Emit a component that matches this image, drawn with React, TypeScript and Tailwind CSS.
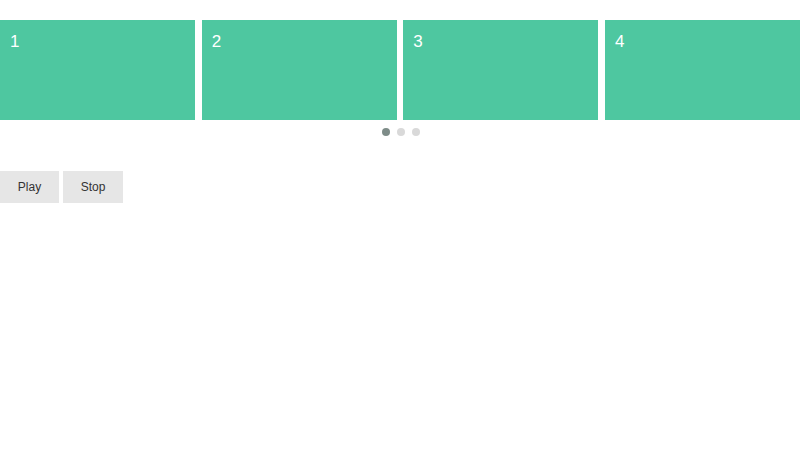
import { useState } from "react";

const slides = ["1", "2", "3", "4"];

export default function App() {
  const [active, setActive] = useState(0);

  return (
    <div className="w-[800px] h-[450px] bg-white font-['Liberation_Sans',Arial,sans-serif]">
      <div className="pt-5 grid grid-cols-4 gap-[6.5px]">
        {slides.map(s => (
          <div key={s} className="h-[100px] bg-[#4ec7a0] text-white text-[17px] px-[10px] pt-[9px]">
            {s}
          </div>
        ))}
      </div>

      <div className="flex justify-center gap-[7px] mt-[8px] ml-[1px]">
        {[0, 1, 2].map(i => (
          <button
            key={i}
            onClick={() => setActive(i)}
            className={
              i === active
                ? "w-2 h-2 rounded-full bg-[#7e8c88]"
                : "w-2 h-2 rounded-full bg-[#d9d9d9]"
            }
          />
        ))}
      </div>

      <div className="flex gap-[4px] mt-[35px]">
        <button className="w-[59px] h-[32px] bg-[#e6e6e6] text-[12px] text-[#333]">Play</button>
        <button className="w-[60px] h-[32px] bg-[#e6e6e6] text-[12px] text-[#333]">Stop</button>
      </div>
    </div>
  );
}
